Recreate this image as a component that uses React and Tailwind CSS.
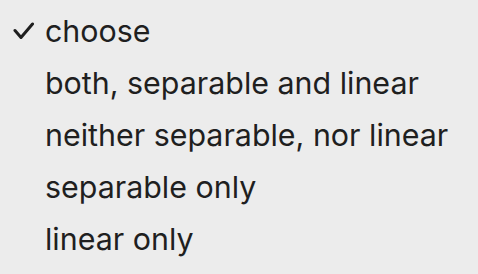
import React from 'react';

const OPTIONS = [
  { label: 'choose', checked: true },
  { label: 'both, separable and linear' },
  { label: 'neither separable, nor linear' },
  { label: 'separable only' },
  { label: 'linear only' },
];

const Check = () => (
  <svg width="22" height="18" viewBox="0 0 22 18" className="shrink-0">
    <path d="M2 8.5 L8 15.5 L19.5 2" fill="none" stroke="#1f1f1f" strokeWidth="3" strokeLinecap="round" strokeLinejoin="round" />
  </svg>
);

export default function App() {
  return (
    <div className="w-[478px] h-[274px] bg-[#ececec] pt-[5px] text-[#1f1f1f]" style={{ fontFamily: 'Inter, "Noto Sans", sans-serif' }}>
      {OPTIONS.map(opt => (
        <div key={opt.label} className="flex items-center h-[52px] text-[30.4px] leading-[52px]">
          <div className="w-[45px] pl-[13px] flex items-center">
            {opt.checked && <Check />}
          </div>
          <span>{opt.label}</span>
        </div>
      ))}
    </div>
  );
}
